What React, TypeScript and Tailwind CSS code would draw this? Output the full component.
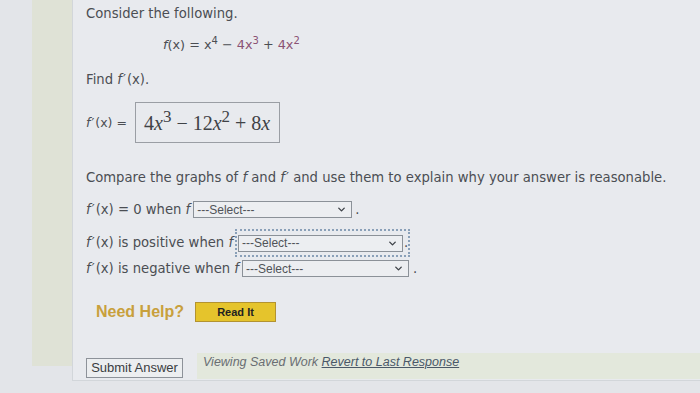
import { ChevronDown } from "lucide-react";

const body = "font-['DejaVu_Sans',Verdana,sans-serif]";
const arial = "font-['Liberation_Sans',Arial,sans-serif]";

function Fp() {
  return (
    <span>
      <span className="italic">f</span>
      <span className="ml-[1px] mr-[1px]">′</span>(x)
    </span>
  );
}

function Select({ width }: { width: string }) {
  return (
    <span
      className={`inline-flex h-[17px] items-center justify-between border border-[#8b9198] bg-[#eceef1] pl-[3px] pr-[4px] text-[12px] text-[#505358] ${arial} ${width}`}
    >
      <span>---Select---</span>
      <ChevronDown size={11} strokeWidth={3} className="text-[#3d4248]" />
    </span>
  );
}

export default function App() {
  return (
    <div className="flex h-[393px] w-[700px] overflow-hidden bg-[#e3e5e9]">
      <div className="w-[32px] shrink-0" />
      <div className="h-[366px] w-[40px] shrink-0 bg-[#dfe2d6]" />
      <div
        className={`flex h-[381px] flex-1 flex-col border-b border-l border-[#d2d6da] bg-[#e8eaee] pl-[13px] pt-[6px] text-[13.2px] leading-[16px] text-[#4b4e53] ${body}`}
      >
        <div>Consider the following.</div>

        <div className="mt-[15px] pl-[77px] text-[12.8px]">
          <span className="italic">f</span>(x) = x<sup className="text-[10px]">4</sup> − <span className="text-[#8a5274]">4x<sup className="text-[10px]">3</sup></span> + <span className="text-[#8a5274]">4x<sup className="text-[10px]">2</sup></span>
        </div>

        <div className="mt-[19px]">
          Find <Fp />.
        </div>

        <div className="mt-[14px] flex items-center">
          <span className="w-[49px] text-[12.5px]">
            <Fp /> =
          </span>
          <div className="flex h-[41px] w-[145px] items-center border border-[#9a9ea4] pl-[8px] font-['Liberation_Serif','Times_New_Roman',serif] text-[20px] text-[#3f4246]">
            <span>4</span>
            <span className="italic">x</span>
            <span className="mb-[12px] text-[17px]">3</span>
            <span className="mx-[5px]">−</span>
            <span>12</span>
            <span className="italic">x</span>
            <span className="mb-[12px] text-[17px]">2</span>
            <span className="mx-[5px]">+</span>
            <span>8</span>
            <span className="italic">x</span>
          </div>
        </div>

        <div className="mt-[27px]">
          Compare the graphs of <span className="italic">f</span> and{" "}
          <span className="italic">f</span>
          <span className="ml-[1px]">′</span> and use them to explain why your answer is reasonable.
        </div>

        <div className="mt-[15px] flex items-center">
          <span>
            <Fp /> = 0 when <span className="italic">f</span>
          </span>
          <span className="ml-[3px]">
            <Select width="w-[159px]" />
          </span>
          <span className="ml-[3px]">.</span>
        </div>

        <div className="mt-[11px] flex items-center">
          <span>
            <Fp /> is positive when <span className="italic">f</span>
          </span>
          <span className="ml-[2px] flex h-[28px] w-[175px] items-center border-2 border-dotted border-[#8aa0b8] pl-[1px]">
            <Select width="w-[167px]" />
            <span className="ml-[1px]">.</span>
          </span>
        </div>

        <div className="mt-[3px] flex items-center">
          <span>
            <Fp /> is negative when <span className="italic">f</span>
          </span>
          <span className="ml-[3px]">
            <Select width="w-[167px]" />
          </span>
          <span className="ml-[4px]">.</span>
        </div>

        <div className="mt-[25px] flex items-center pl-[10px]">
          <span className={`text-[16px] font-bold text-[#c8a03c] ${arial}`}>Need Help?</span>
          <span
            className={`ml-[11px] flex h-[20px] w-[81px] items-center justify-center border border-[#b39330] bg-[#e5c42c] text-[11px] font-bold text-[#222] ${arial}`}
          >
            Read It
          </span>
        </div>

        <div className="mt-[31px] flex h-[26px] items-start">
          <span
            className={`mt-[5px] flex h-[20px] w-[97px] items-center justify-center border border-[#8d9299] bg-[#eceef0] text-[13px] text-[#3a3d41] ${arial}`}
          >
            Submit Answer
          </span>
          <div
            className={`ml-[14px] flex h-[26px] flex-1 items-start bg-[#e3e8dc] pl-[6px] pt-[1px] text-[12.5px] italic text-[#6a6e73] ${arial}`}
          >
            Viewing Saved Work&nbsp;
            <span className="text-[#4a5868] underline">Revert to Last Response</span>
          </div>
        </div>
      </div>
    </div>
  );
}
